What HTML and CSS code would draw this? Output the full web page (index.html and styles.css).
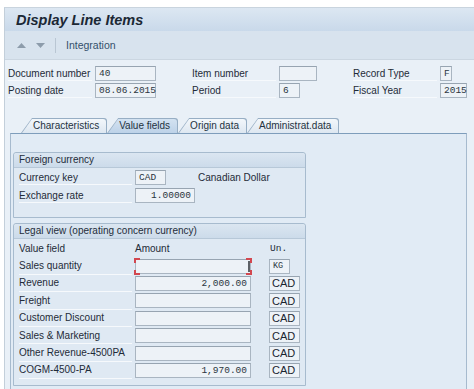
FILE: index.html
```html
<!DOCTYPE html>
<html lang="en">
<head>
    <meta charset="UTF-8">
    <title>Display Line Items</title>
    <link rel="stylesheet" href="styles.css">
</head>
<body>
    <div class="window">
        <div class="titlebar">
            <h1>Display Line Items</h1>
        </div>

        <div class="toolbar">
            <svg class="arrow" width="9" height="5" viewBox="0 0 9 5"><path d="M0 5 L4.5 0 L9 5 Z"/></svg>
            <svg class="arrow" width="9" height="5" viewBox="0 0 9 5"><path d="M0 0 L4.5 5 L9 0 Z"/></svg>
            <span class="sep"></span>
            <span class="tool-btn">Integration</span>
        </div>

        <div class="head-fields">
            <span class="lbl">Document number</span>
            <span class="fld mono w61">40</span>
            <span class="lbl">Item number</span>
            <span class="fld w38"></span>
            <span class="lbl">Record Type</span>
            <span class="fld mono w12">F</span>

            <span class="lbl">Posting date</span>
            <span class="fld mono w61">08.06.2015</span>
            <span class="lbl">Period</span>
            <span class="fld mono w21">6</span>
            <span class="lbl">Fiscal Year</span>
            <span class="fld mono w27">2015</span>
        </div>

        <div class="tabstrip">
            <span class="tab">Characteristics</span>
            <span class="tab active">Value fields</span>
            <span class="tab">Origin data</span>
            <span class="tab">Administrat.data</span>
        </div>

        <div class="tabpanel">
            <div class="group">
                <div class="group-head">Foreign currency</div>
                <div class="group-body fx">
                    <span class="lbl">Currency key</span>
                    <span class="fld mono w31">CAD</span>
                    <span class="plain">Canadian Dollar</span>

                    <span class="lbl">Exchange rate</span>
                    <span class="fld mono w60 right">1.00000</span>
                    <span></span>
                </div>
            </div>

            <div class="group">
                <div class="group-head">Legal view (operating concern currency)</div>
                <div class="group-body legal">
                    <span class="colhead">Value field</span>
                    <span class="colhead">Amount</span>
                    <span class="colhead mono">Un.</span>

                    <span class="lbl">Sales quantity</span>
                    <span class="fld amount focus"></span>
                    <span class="fld mono unit-kg">KG</span>

                    <span class="lbl">Revenue</span>
                    <span class="fld mono amount">2,000.00</span>
                    <span class="fld unit">CAD</span>

                    <span class="lbl">Freight</span>
                    <span class="fld amount"></span>
                    <span class="fld unit">CAD</span>

                    <span class="lbl">Customer Discount</span>
                    <span class="fld amount"></span>
                    <span class="fld unit">CAD</span>

                    <span class="lbl">Sales &amp; Marketing</span>
                    <span class="fld amount"></span>
                    <span class="fld unit">CAD</span>

                    <span class="lbl">Other Revenue-4500PA</span>
                    <span class="fld amount"></span>
                    <span class="fld unit">CAD</span>

                    <span class="lbl">COGM-4500-PA</span>
                    <span class="fld mono amount">1,970.00</span>
                    <span class="fld unit">CAD</span>
                </div>
            </div>
        </div>
    </div>
</body>
</html>
```

FILE: styles.css
```css
body {
    margin: 0;
    background: #ffffff;
    font-family: "Liberation Sans", Arial, sans-serif;
    font-size: 10px;
    color: #1e2b38;
}

.window {
    margin: 7px 0 0 4px;
    height: 382px;
    overflow: hidden;
    background: #e9f0f7;
    border-left: 1px solid #c3cfda;
    border-top: 1px solid #c9d4de;
}

.titlebar {
    height: 23px;
    padding-left: 11px;
    display: flex;
    align-items: center;
    background: linear-gradient(#dce7f2, #c9d9ea);
}

.titlebar h1 {
    margin: 0;
    font-size: 14.5px;
    font-style: italic;
    font-weight: bold;
    color: #1b2835;
}

.toolbar {
    height: 28px;
    padding-left: 12px;
    display: flex;
    align-items: center;
    background: #d8e3ee;
    border-bottom: 1px solid #cbd6e1;
}

.arrow {
    fill: #8d9cab;
    margin-right: 10px;
}

.sep {
    width: 1px;
    height: 15px;
    background: #b9c6d3;
    margin: 0 10px 0 0;
}

.tool-btn {
    font-size: 10.5px;
    color: #34506b;
}

.mono {
    font-family: "Liberation Mono", "Courier New", monospace;
    font-size: 9.5px;
}

.lbl {
    display: flex;
    align-items: center;
    margin-right: 3px;
    border-bottom: 1px solid #f6f9fc;
    white-space: nowrap;
}

.fld {
    height: 15px;
    box-sizing: border-box;
    padding: 0 3px;
    display: flex;
    align-items: center;
    background: #edf2f7;
    border: 1px solid #a9b5c1;
    border-top-color: #97a4b1;
    color: #2a3540;
    white-space: nowrap;
}

.right {
    justify-content: flex-end;
}

.w12 { width: 12px; }
.w21 { width: 21px; }
.w27 { width: 27px; }
.w31 { width: 31px; }
.w38 { width: 38px; }
.w60 { width: 60px; }
.w61 { width: 61px; }

/* header fields */
.head-fields {
    display: grid;
    grid-template-columns: 87px 97px 87px 74px 87px auto;
    grid-auto-rows: 15px;
    row-gap: 2px;
    margin: 6px 0 0 3px;
}

/* tabs */
.tabstrip {
    display: flex;
    height: 15px;
    margin: 20px 0 0 16px;
}

.tab {
    position: relative;
    z-index: 0;
    height: 15px;
    line-height: 15px;
    padding: 0 8px 0 12px;
    color: #24323f;
}

.tab::before,
.tab::after {
    content: "";
    position: absolute;
    z-index: -1;
    border-top-right-radius: 3px;
}

.tab::before {
    inset: 0;
    background: #97aec4;
    clip-path: polygon(11px 0, 100% 0, 100% 100%, 0 100%);
}

.tab::after {
    inset: 1px 1px 0 1px;
    background: linear-gradient(#f3f7fb, #dde7f1);
    clip-path: polygon(10px 0, 100% 0, 100% 100%, 0 100%);
}

.tab.active::after {
    background: linear-gradient(#d3e2f1, #bdd2e8);
}

.tabpanel {
    margin-left: 5px;
    width: 457px;
    height: 260px;
    box-sizing: border-box;
    padding: 18px 0 0 2px;
    background: #e1ebf5;
    border: 1px solid #a6bace;
    border-top-color: #7e9dbb;
}

/* group boxes */
.group {
    width: 293px;
    box-sizing: border-box;
    background: #dfe9f3;
    border: 1px solid #a7bbce;
    border-radius: 3px 3px 0 0;
    margin-bottom: 5px;
}

.group-head {
    height: 14px;
    line-height: 14px;
    padding-left: 5px;
    background: linear-gradient(#dbe6f1, #ccdbea);
    border-bottom: 1px solid #b7c8d8;
    border-radius: 3px 3px 0 0;
    color: #1f2d3a;
}

.group-body {
    display: grid;
    padding-left: 5px;
}

.fx {
    grid-template-columns: 116px auto 1fr;
    grid-auto-rows: 15px;
    row-gap: 3px;
    padding-top: 2px;
    padding-bottom: 14px;
}

.plain {
    display: flex;
    align-items: center;
    margin-left: 3px;
}

.legal {
    grid-template-columns: 116px 134px 31px;
    grid-auto-rows: 17.4px;
    padding-top: 1px;
    padding-bottom: 6px;
    align-items: center;
}

.legal .lbl {
    height: 100%;
    box-sizing: border-box;
}

.colhead {
    display: flex;
    align-items: center;
    height: 100%;
}

.colhead.mono {
    padding-left: 1px;
}

.amount {
    width: 116px;
    justify-content: flex-end;
}

.unit {
    width: 31px;
    padding: 0 2px;
    font-size: 11px;
    color: #1a2530;
}

.unit-kg {
    width: 21px;
    font-size: 8.5px;
}

.focus {
    position: relative;
}

.focus::before {
    content: "";
    position: absolute;
    inset: -2px -2px -2px -2px;
    background:
        linear-gradient(#d2474f, #d2474f) left top / 6px 2px no-repeat,
        linear-gradient(#d2474f, #d2474f) left top / 2px 5px no-repeat,
        linear-gradient(#d2474f, #d2474f) right top / 6px 2px no-repeat,
        linear-gradient(#d2474f, #d2474f) right top / 2px 5px no-repeat,
        linear-gradient(#d2474f, #d2474f) left bottom / 6px 2px no-repeat,
        linear-gradient(#d2474f, #d2474f) left bottom / 2px 5px no-repeat,
        linear-gradient(#d2474f, #d2474f) right bottom / 6px 2px no-repeat,
        linear-gradient(#d2474f, #d2474f) right bottom / 2px 5px no-repeat;
}

.focus::after {
    content: "";
    position: absolute;
    right: 0;
    top: 1px;
    bottom: 1px;
    width: 2px;
    background: #5d6166;
}
```
